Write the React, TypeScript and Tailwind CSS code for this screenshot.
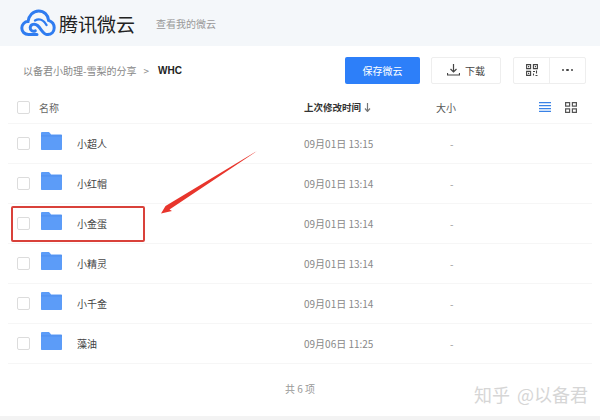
const FONT = "font-['Noto_Sans_CJK_SC','Noto_Sans',sans-serif]";

const rows = [
  { name: "小超人", date: "09月01日 13:15" },
  { name: "小红帽", date: "09月01日 13:14" },
  { name: "小金蛋", date: "09月01日 13:14" },
  { name: "小精灵", date: "09月01日 13:14" },
  { name: "小千金", date: "09月01日 13:14" },
  { name: "藻油", date: "09月06日 11:25" },
];

function Cloud() {
  return (
    <svg width="36" height="28" viewBox="0 0 36 28" fill="none" stroke="#2f7cf0" strokeWidth="3" strokeLinecap="round">
      <path d="M17 25.500H8.500C4.500 25.500 1.800 22.600 1.800 19C1.800 15.400 4.600 12.600 8 12.600C8.800 6.600 13 2 18.600 2C24 2 28.200 6 28.600 11.400C32 12.600 34.200 15.400 34.200 18.800C34.200 22.800 31.400 25.500 27.500 25.600" />
      <path d="M27.500 25.600C23 25.600 21.500 20 17.500 16.500C15 14.300 10.500 15 10.200 18.600C10 21.500 13 23 15.300 21.800" />
      <path d="M15 11.500C19.500 9 24 11.500 26.500 16" strokeWidth="2.400" />
    </svg>
  );
}

function Folder() {
  return (
    <svg width="21" height="18" viewBox="0 0 21 18" className="shrink-0">
      <path d="M0 1.200C0 .5.5 0 1.200 0H8l2.200 2.400H20c.6 0 1 .4 1 1V17c0 .6-.4 1-1 1H1c-.6 0-1-.4-1-1Z" fill="#5c9cf8" />
      <path d="M0 3.400h21v1H0Z" fill="#4f8fee" />
    </svg>
  );
}

function Check() {
  return <div className="w-[13px] h-[13px] rounded-[2px] border border-[#dcdcdc] bg-white shrink-0" />;
}

export default function App() {
  return (
    <div className={`relative w-[600px] h-[420px] overflow-hidden bg-white ${FONT}`}>
      <header className="h-[46px] bg-[#f4f7fa] flex items-center pl-[20px]">
        <Cloud />
        <span className="ml-[3px] text-[19px] leading-none text-[#222]">腾讯微云</span>
        <span className="ml-[21px] text-[10px] text-[#999]">查看我的微云</span>
      </header>

      <div className="h-[48px] flex items-center pl-[23px] pr-[14px]">
        <span className="text-[10px] text-[#888]">以备君小助理-雪梨的分享</span>
        <span className="ml-[7px] text-[10px] text-[#888]">&gt;</span>
        <span className="ml-[9px] text-[10px] font-bold text-[#222] font-['Liberation_Sans']">WHC</span>
        <button className="ml-auto w-[75px] h-[27px] rounded-[2px] bg-[#2d7ff9] text-white text-[10px]">保存微云</button>
        <button className="ml-[11px] w-[70px] h-[27px] rounded-[2px] border border-[#eeeeee] flex items-center justify-center gap-[5px] text-[10px] text-[#444]">
          <svg width="13" height="12" viewBox="0 0 13 12" fill="none" stroke="#444" strokeWidth="1.200">
            <path d="M6.500 0v7.500M3.500 5l3 3 3-3" />
            <path d="M.5 9v2h12V9" />
          </svg>
          下载
        </button>
        <div className="ml-[12px] w-[73px] h-[27px] rounded-[2px] border border-[#eeeeee] flex">
          <div className="w-[36px] flex items-center justify-center border-r border-[#eeeeee]">
            <svg width="12" height="12" viewBox="0 0 12 12" fill="none" stroke="#444" strokeWidth="1.100">
              <path d="M.6.6h4v4h-4ZM7.400.6h4v4h-4ZM.6 7.400h4v4h-4Z" />
              <path d="M2 2h1.200v1.200H2ZM8.800 2H10v1.200H8.800ZM2 8.800h1.200V10H2Z" fill="#444" stroke="none" />
              <path d="M7 7.500h2M10.500 6.500v3M7.500 9.500v2M9.500 11.500h2" />
            </svg>
          </div>
          <div className="flex-1 flex items-center justify-center gap-[2px]">
            <span className="w-[2.500px] h-[2.500px] rounded-full bg-[#444]" />
            <span className="w-[2.500px] h-[2.500px] rounded-full bg-[#444]" />
            <span className="w-[2.500px] h-[2.500px] rounded-full bg-[#444]" />
          </div>
        </div>
      </div>

      <div className="mx-[8px] h-[30px] pb-[3px] flex items-center border-b border-[#f6f6f6] pl-[9px]">
        <Check />
        <span className="ml-[9px] text-[10px] text-[#666]">名称</span>
        <span className="ml-[245px] text-[9.500px] font-bold text-[#333]">上次修改时间</span>
        <svg width="7" height="9" viewBox="0 0 7 9" fill="none" stroke="#777" strokeWidth="1.200" className="ml-[3px]">
          <path d="M3.500 0v8M1 5.500l2.500 3 2.500-3" />
        </svg>
        <span className="ml-[65px] text-[10px] text-[#555]">大小</span>
        <svg width="12" height="10" viewBox="0 0 12 10" stroke="#3a82e6" strokeWidth="1.200" className="ml-[83px]">
          <path d="M0 .6h12M0 3.600h12M0 6.600h12M0 9.400h12" />
        </svg>
        <svg width="12" height="11" viewBox="0 0 12 11" fill="none" stroke="#555" strokeWidth="1.200" className="ml-[14px]">
          <path d="M.6.6h4v3.500h-4ZM7.400.6h4v3.500h-4ZM.6 6.900h4v3.500h-4ZM7.400 6.900h4v3.500h-4Z" />
        </svg>
      </div>

      <div>
        {rows.map((r) => (
          <div key={r.name} className="mx-[8px] h-[40px] flex items-center border-b border-[#f6f6f6] pl-[9px]">
            <Check />
            <div className="ml-[11px] -mt-[6px]"><Folder /></div>
            <span className="ml-[15px] w-[227px] text-[10px] text-[#444]">{r.name}</span>
            <span className="text-[10px] text-[#888] w-[146px]">{r.date}</span>
            <span className="text-[10px] text-[#999]">-</span>
          </div>
        ))}
      </div>

      <div className="h-[49px] flex items-center justify-center text-[10px] text-[#999]">共 6 项</div>
      <div className="absolute left-0 right-0 bottom-0 h-[4px] bg-[#f3f3f3]" />

      <div className="absolute left-[11px] top-[206px] w-[134px] h-[36px] border-2 border-[#d9413a] rounded-[2px]" />
      <svg className="absolute left-[155px] top-[145px]" width="110" height="75" viewBox="0 0 110 75">
        <path d="M102 6 10.500 61 6 68.500 17 66 14.500 64.500Z" fill="#e8352c" />
      </svg>

      <div className="absolute left-[474px] top-[381px] flex items-baseline gap-[7px] text-[18px] text-[#d6d6d6]">
        <span>知乎</span>
        <span>@以备君</span>
      </div>
    </div>
  );
}
